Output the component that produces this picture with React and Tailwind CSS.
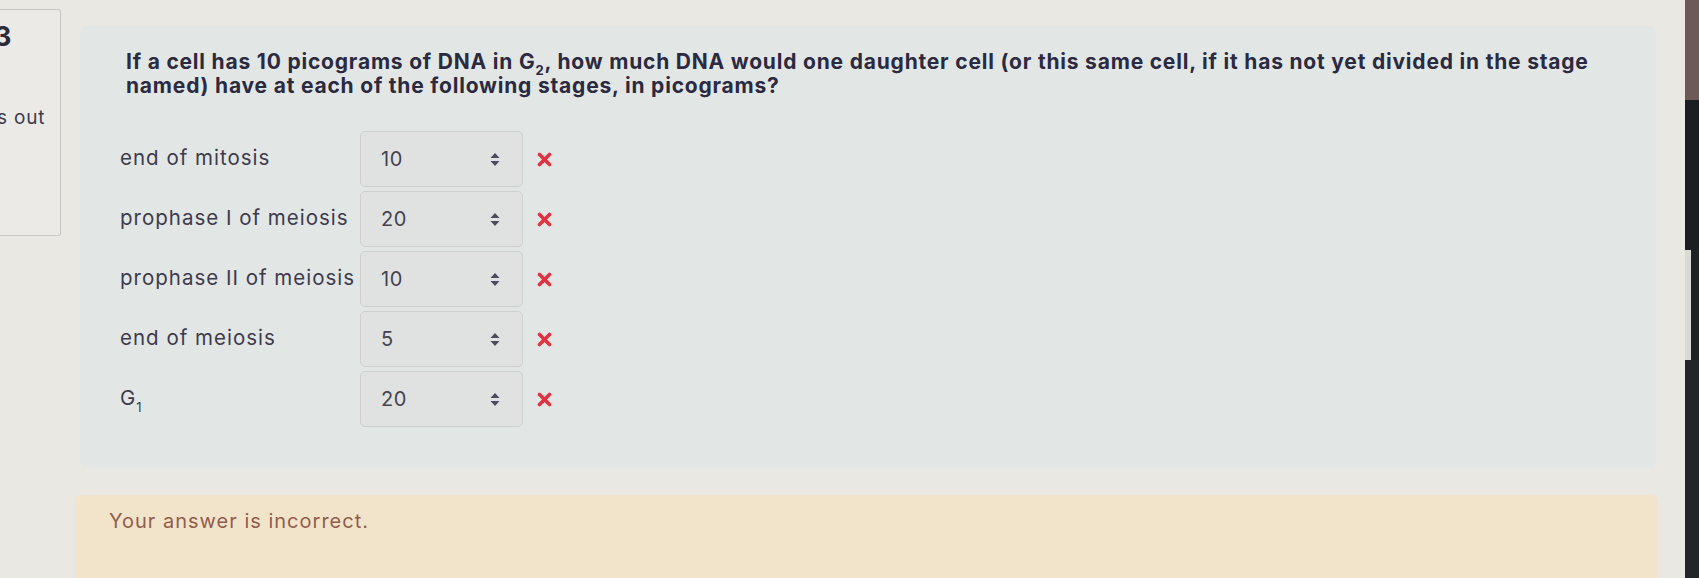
import React from 'react';

const rows = [
  { label: 'end of mitosis', value: '10' },
  { label: 'prophase I of meiosis', value: '20' },
  { label: 'prophase II of meiosis', value: '10' },
  { label: 'end of meiosis', value: '5' },
  { label: 'G1', value: '20', sub: true },
];

const SpinArrows = () => (
  <svg width="10" height="15" viewBox="0 0 10 15" className="shrink-0">
    <path d="M5 1 L9.5 6 L0.5 6 Z" fill="#4b4b5a" />
    <path d="M5 14 L9.5 9 L0.5 9 Z" fill="#4b4b5a" />
  </svg>
);

const WrongMark = () => (
  <svg width="15" height="15" viewBox="0 0 15 15">
    <path d="M2.5 2.5 L12.5 12.5 M12.5 2.5 L2.5 12.5" stroke="#e2313f" strokeWidth="3.6" strokeLinecap="round" />
  </svg>
);

const AnswerRow = ({ row }) => (
  <div className="flex items-center h-[56px]">
    <div className="w-[240px] text-[20.5px] tracking-[1px] text-[#3d3a4c] leading-none -mt-[2px]">
      {row.sub ? (
        <span>
          G<sub className="text-[13px] leading-[0] align-[-4px]">1</sub>
        </span>
      ) : (
        row.label
      )}
    </div>
    <div className="w-[163px] h-[56px] flex items-center justify-between pl-[20px] pr-[22px] bg-[#e0e2e1] border border-[#cdd0cf] rounded-[5px] text-[20px] tracking-[0.5px] text-[#45434f]">
      <span>{row.value}</span>
      <SpinArrows />
    </div>
    <div className="ml-[14px]">
      <WrongMark />
    </div>
  </div>
);

export default function App() {
  return (
    <div
      className="w-[1699px] h-[578px] overflow-hidden flex bg-[#e9e8e3]"
      style={{ fontFamily: 'Inter, "Noto Sans", sans-serif' }}
    >
      {/* question info block, cut off on the left */}
      <div className="w-[61px] h-[227px] mt-[9px] shrink-0 border border-l-0 border-[#c8c8c6] rounded-r-[3px] bg-[#ebeae6] overflow-hidden">
        <div className="text-[27px] font-bold text-[#2d2b3a] -ml-[6px] mt-[13px] leading-none">3</div>
        <div className="text-[19px] tracking-[0.8px] text-[#3d3a4c] -ml-[3px] mt-[58px] leading-none">s out</div>
      </div>

      <div className="flex flex-col w-[1597px] shrink-0">
        <div className="shrink-0 ml-[19px] mt-[26px] h-[442px] w-[1576px] bg-[#e2e7e6] rounded-[6px] pl-[46px] pt-[24px]">
          <p className="text-[21px] font-bold leading-[24px] tracking-[0.8px] text-[#2b2a40] w-[1490px]">
            If a cell has 10 picograms of DNA in G<sub className="text-[13px] leading-[0] align-[-3px]">2</sub>, how much DNA would one daughter cell (or this same cell, if it has not yet divided in the stage named) have at each of the following stages, in picograms?
          </p>
          <div className="flex flex-col gap-[4px] mt-[33px] -ml-[6px]">
            {rows.map((r) => (
              <AnswerRow key={r.label} row={r} />
            ))}
          </div>
        </div>

        <div className="shrink-0 ml-[14px] mt-[27px] w-[1583px] h-[90px] bg-[#f2e4cb] rounded-[6px] pl-[34px] pt-[11px]">
          <span className="text-[20px] tracking-[1px] text-[#915d4b]">Your answer is incorrect.</span>
        </div>
      </div>

      {/* monitor edge */}
      <div className="ml-auto w-[14px] h-full bg-[#1d2126] flex flex-col">
        <div className="h-[100px] bg-[#6b5a55]" />
        <div className="h-[150px] bg-[#1b1f24]" />
        <div className="h-[110px] bg-[#d9d9d6] w-[6px]" />
        <div className="flex-1 bg-[#22262b]" />
      </div>
    </div>
  );
}
